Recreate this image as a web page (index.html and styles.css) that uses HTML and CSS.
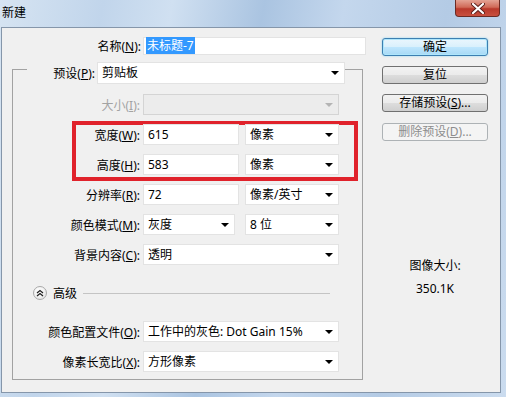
FILE: index.html
```html
<!DOCTYPE html>
<html lang="zh-CN">
<head>
<meta charset="UTF-8">
<title>新建</title>
<link rel="stylesheet" href="styles.css">
</head>
<body>

<div class="window">
    <div class="titlebar">
        <span class="title">新建</span>
        <span class="close">
            <svg width="14" height="11" viewBox="0 0 14 11">
                <path d="M2 1 L12 10 M12 1 L2 10" stroke="#5a1f1a" stroke-width="4" stroke-linecap="round"/>
                <path d="M2 1 L12 10 M12 1 L2 10" stroke="#fff" stroke-width="2.2" stroke-linecap="round"/>
            </svg>
        </span>
    </div>

    <div class="client">
        <div class="form">
            <div class="row name-row">
                <span class="label">名称(<u>N</u>):</span>
                <span class="field name-field"><span class="selected">未标题-7</span></span>
            </div>

            <div class="group">
                <div class="row preset-row">
                    <span class="label">预设(<u>P</u>):</span>
                    <span class="field select preset">剪贴板</span>
                </div>
                <div class="row size-row">
                    <span class="label disabled">大小(<u>I</u>):</span>
                    <span class="field select full off"></span>
                </div>

                <!-- red annotation box around width / height -->
                <div class="highlight">
                    <div class="row">
                        <span class="label">宽度(<u>W</u>):</span>
                        <span class="field num">615</span>
                        <span class="field select unit">像素</span>
                    </div>
                    <div class="row">
                        <span class="label">高度(<u>H</u>):</span>
                        <span class="field num">583</span>
                        <span class="field select unit">像素</span>
                    </div>
                </div>

                <div class="row">
                    <span class="label">分辨率(<u>R</u>):</span>
                    <span class="field num">72</span>
                    <span class="field select unit">像素/英寸</span>
                </div>
                <div class="row">
                    <span class="label">颜色模式(<u>M</u>):</span>
                    <span class="field select mode">灰度</span>
                    <span class="field select unit">8 位</span>
                </div>
                <div class="row">
                    <span class="label">背景内容(<u>C</u>):</span>
                    <span class="field select full">透明</span>
                </div>

                <div class="advanced">
                    <span class="toggle">
                        <svg width="8" height="8" viewBox="0 0 8 8">
                            <path d="M1 4 L4 1.5 L7 4 M1 7 L4 4.5 L7 7" fill="none" stroke="#222" stroke-width="1.3"/>
                        </svg>
                    </span>
                    <span class="adv-text">高级</span>
                    <span class="rule"></span>
                </div>

                <div class="row profile-row">
                    <span class="label">颜色配置文件(<u>O</u>):</span>
                    <span class="field select full">工作中的灰色: Dot Gain 15%</span>
                </div>
                <div class="row">
                    <span class="label">像素长宽比(<u>X</u>):</span>
                    <span class="field select full">方形像素</span>
                </div>
            </div>
        </div>

        <div class="side">
            <button class="btn default">确定</button>
            <button class="btn">复位</button>
            <button class="btn">存储预设(<u>S</u>)...</button>
            <button class="btn off">删除预设(<u>D</u>)...</button>

            <div class="info">
                <div class="info-label">图像大小:</div>
                <div class="info-value">350.1K</div>
            </div>
        </div>
    </div>
</div>

</body>
</html>
```

FILE: styles.css
```css
body {
    margin: 0;
    font-family: "Noto Sans", "Noto Sans CJK SC", sans-serif;
    font-size: 12px;
    color: #000;
    background: #b9cfe7;
}

u {
    text-decoration: underline;
    text-underline-offset: 1px;
}

.window {
    width: 506px;
    height: 397px;
    overflow: hidden;
    background: linear-gradient(100deg, #d6e4f2 0%, #c1d5eb 18%, #d0e0f1 30%, #aac4e1 46%, #c4d7ed 60%, #b4cbe5 78%, #cbdcef 100%);
}

.titlebar {
    height: 27px;
    display: flex;
    justify-content: space-between;
    align-items: flex-start;
}

.title {
    margin: 5px 0 0 2px;
    line-height: 16px;
}

.close {
    width: 45px;
    height: 17px;
    margin-right: 6px;
    box-sizing: border-box;
    border: 1px solid #6b2b24;
    border-top: none;
    border-radius: 0 0 4px 4px;
    background: linear-gradient(#e4a394 0%, #d06a58 45%, #b9392b 55%, #c8503f 100%);
    display: flex;
    align-items: center;
    justify-content: center;
}

.client {
    width: 500px;
    height: 366px;
    margin-left: 1px;
    box-sizing: border-box;
    border: 1px solid #8596aa;
    background: #f0f0f0;
    display: flex;
}

/* left part with the fields */
.form {
    width: 364px;
    padding-top: 9px;
}

.row {
    display: flex;
    align-items: center;
    height: 21px;
    margin-top: 9px;
}

.label {
    width: 127px;
    margin-right: 3px;
    text-align: right;
    white-space: nowrap;
}

.label.disabled {
    color: #a3a3a3;
}

.field {
    position: relative;
    height: 21px;
    box-sizing: border-box;
    padding-left: 4px;
    line-height: 19px;
    background: #fff;
    border: 1px solid #e3e3e3;
    white-space: nowrap;
}

.select::after {
    content: "";
    position: absolute;
    right: 5px;
    top: 8px;
    border-left: 4px solid transparent;
    border-right: 4px solid transparent;
    border-top: 4px solid #000;
}

.select.off {
    background: #ececec;
    border-color: #d4d4d4;
}

.select.off::after {
    border-top-color: #b4b4b4;
}

.name-row {
    margin-top: 0;
    height: 18px;
}

.name-row .label {
    width: 139px;
    margin-right: 2px;
}

.name-field {
    width: 223px;
    height: 18px;
    line-height: 16px;
    padding-left: 2px;
}

.selected {
    background: #3399ff;
    color: #fff;
    padding: 0 1px;
}

.group {
    width: 351px;
    height: 311px;
    margin: 14px 0 0 10px;
    box-sizing: border-box;
    border: 1px solid #a2a2a2;
}

.preset-row {
    margin: -8px 0 0 14px;
    width: 318px;
    height: 22px;
    background: #f0f0f0;
}

.preset-row .label {
    width: 68px;
    margin-right: 2px;
}

.preset {
    width: 248px;
    height: 22px;
}

.size-row {
    margin-top: 10px;
}

.full {
    width: 196px;
}

.num {
    width: 96px;
}

.mode {
    width: 92px;
    margin-right: 10px;
}

.num + .unit {
    margin-left: 6px;
}

.unit {
    width: 94px;
}

.highlight {
    position: relative;
}

.highlight::before {
    content: "";
    position: absolute;
    left: 59px;
    right: 4px;
    top: -3px;
    bottom: -6px;
    border: 4px solid #e0222b;
    pointer-events: none;
}

.advanced {
    display: flex;
    align-items: center;
    height: 16px;
    margin-top: 20px;
    padding-left: 20px;
}

.toggle {
    width: 14px;
    height: 14px;
    box-sizing: border-box;
    border: 1px solid #a9a9a9;
    border-radius: 50%;
    background: radial-gradient(circle at 40% 35%, #fff 0%, #f2f2f2 50%, #d9d9d9 100%);
    display: flex;
    align-items: center;
    justify-content: center;
}

.adv-text {
    margin-left: 6px;
}

.rule {
    flex: 1;
    height: 1px;
    margin: 1px 32px 0 6px;
    background: #c4c4c4;
}

.profile-row {
    margin-top: 20px;
}

/* right part with the buttons */
.side {
    width: 106px;
    margin-left: 16px;
    padding-top: 10px;
    display: flex;
    flex-direction: column;
}

.btn {
    height: 18px;
    margin: 0 0 10px 0;
    padding: 0;
    font-family: inherit;
    font-size: 12px;
    line-height: 14px;
    color: #000;
    border: 1px solid #707070;
    border-radius: 3px;
    background: linear-gradient(#f2f2f2 0%, #ebebeb 50%, #dddddd 51%, #cfcfcf 100%);
}

.btn.default {
    border-color: #3c7fb1;
    background: linear-gradient(#eaf6fd 0%, #d9f0fc 50%, #bee6fd 51%, #a7d9f5 100%);
    box-shadow: inset 0 0 0 1px #aee6fb, 0 0 2px #7fd0f0;
}

.btn.off {
    margin-top: 1px;
    color: #8d8d8d;
    border-color: #adb2b5;
    background: #f4f4f4;
}

.info {
    margin-top: 107px;
    text-align: center;
    line-height: 16px;
}

.info-value {
    margin-top: 7px;
}
```
